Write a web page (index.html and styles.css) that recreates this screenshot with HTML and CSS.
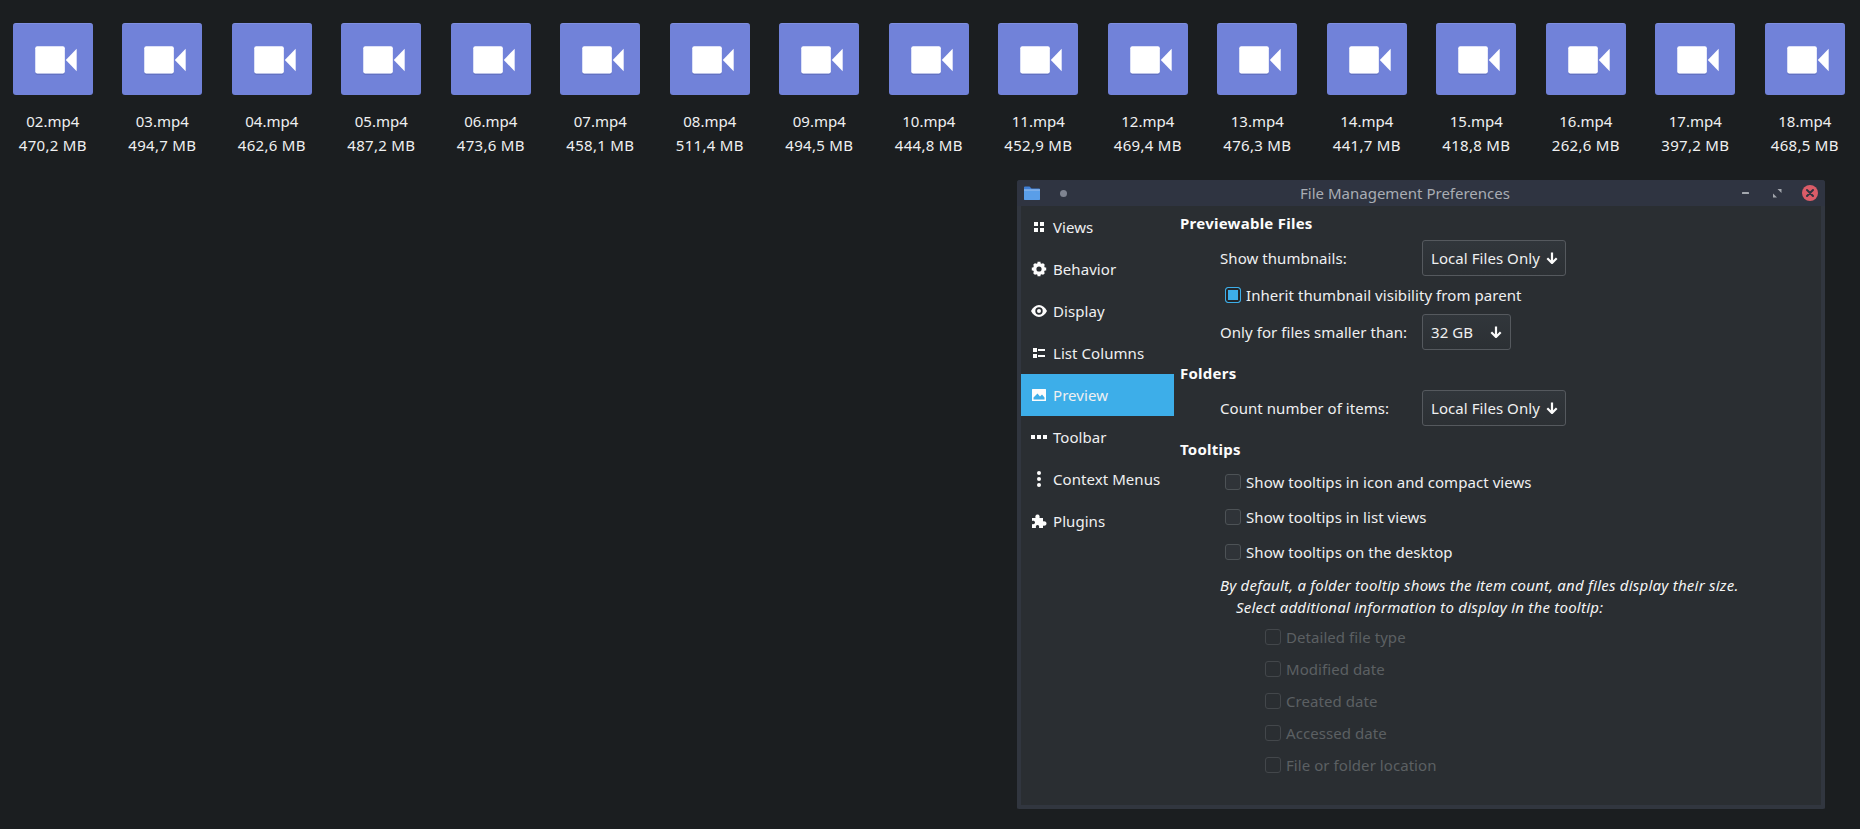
FILE: index.html
```html
<!DOCTYPE html>
<html lang="en">
<head>
<meta charset="utf-8">
<title>File Management Preferences</title>
<link rel="stylesheet" href="styles.css">
</head>
<body>
<svg class="defs" width="0" height="0" aria-hidden="true">
  <symbol id="video" viewBox="0 0 80 72">
    <path d="M22 24.5a2 2 0 0 1 2-2h26a2 2 0 0 1 2 2v24a2 2 0 0 1-2 2H24a2 2 0 0 1-2-2z" fill="#fff"/>
    <path d="M64 25v23L53 36.5z" fill="#fff"/>
    <path d="M22 48.5v1a2 2 0 0 0 2 2h26a2 2 0 0 0 2-2v-1a2 2 0 0 1-2 2H24a2 2 0 0 1-2-2z" fill="#5d6cba"/>
  </symbol>
</svg>

<main class="files">
  <div class="file"><svg class="thumb" viewBox="0 0 80 72"><use href="#video"/></svg><span class="name">02.mp4</span><span class="size">470,2 MB</span></div>
  <div class="file"><svg class="thumb" viewBox="0 0 80 72"><use href="#video"/></svg><span class="name">03.mp4</span><span class="size">494,7 MB</span></div>
  <div class="file"><svg class="thumb" viewBox="0 0 80 72"><use href="#video"/></svg><span class="name">04.mp4</span><span class="size">462,6 MB</span></div>
  <div class="file"><svg class="thumb" viewBox="0 0 80 72"><use href="#video"/></svg><span class="name">05.mp4</span><span class="size">487,2 MB</span></div>
  <div class="file"><svg class="thumb" viewBox="0 0 80 72"><use href="#video"/></svg><span class="name">06.mp4</span><span class="size">473,6 MB</span></div>
  <div class="file"><svg class="thumb" viewBox="0 0 80 72"><use href="#video"/></svg><span class="name">07.mp4</span><span class="size">458,1 MB</span></div>
  <div class="file"><svg class="thumb" viewBox="0 0 80 72"><use href="#video"/></svg><span class="name">08.mp4</span><span class="size">511,4 MB</span></div>
  <div class="file"><svg class="thumb" viewBox="0 0 80 72"><use href="#video"/></svg><span class="name">09.mp4</span><span class="size">494,5 MB</span></div>
  <div class="file"><svg class="thumb" viewBox="0 0 80 72"><use href="#video"/></svg><span class="name">10.mp4</span><span class="size">444,8 MB</span></div>
  <div class="file"><svg class="thumb" viewBox="0 0 80 72"><use href="#video"/></svg><span class="name">11.mp4</span><span class="size">452,9 MB</span></div>
  <div class="file"><svg class="thumb" viewBox="0 0 80 72"><use href="#video"/></svg><span class="name">12.mp4</span><span class="size">469,4 MB</span></div>
  <div class="file"><svg class="thumb" viewBox="0 0 80 72"><use href="#video"/></svg><span class="name">13.mp4</span><span class="size">476,3 MB</span></div>
  <div class="file"><svg class="thumb" viewBox="0 0 80 72"><use href="#video"/></svg><span class="name">14.mp4</span><span class="size">441,7 MB</span></div>
  <div class="file"><svg class="thumb" viewBox="0 0 80 72"><use href="#video"/></svg><span class="name">15.mp4</span><span class="size">418,8 MB</span></div>
  <div class="file"><svg class="thumb" viewBox="0 0 80 72"><use href="#video"/></svg><span class="name">16.mp4</span><span class="size">262,6 MB</span></div>
  <div class="file"><svg class="thumb" viewBox="0 0 80 72"><use href="#video"/></svg><span class="name">17.mp4</span><span class="size">397,2 MB</span></div>
  <div class="file"><svg class="thumb" viewBox="0 0 80 72"><use href="#video"/></svg><span class="name">18.mp4</span><span class="size">468,5 MB</span></div>
</main>

<section class="window">
  <header class="titlebar">
    <div class="tb-left">
      <svg class="tb-folder" width="16" height="14" viewBox="0 0 16 14"><path d="M0 1.5A1 1 0 0 1 1 .5h4.5L7.5 2.5H15a1 1 0 0 1 1 1V13a1 1 0 0 1-1 1H1a1 1 0 0 1-1-1z" fill="#3f7fd6"/><path d="M0 4.5h16V13a1 1 0 0 1-1 1H1a1 1 0 0 1-1-1z" fill="#5a9ee8"/><rect y="3.5" width="16" height="1" fill="#a9cdf3"/></svg>
      <span class="tb-dot"></span>
    </div>
    <div class="tb-title">File Management Preferences</div>
    <div class="tb-right">
      <svg class="tb-min" width="8" height="4" viewBox="0 0 8 4"><rect y="1" width="7" height="2" rx=".5" fill="#a3a7ae"/></svg>
      <svg width="9" height="9" viewBox="0 0 9 9"><path d="M4.500 0h4v4zM4 8.500H0v-4z" fill="#a3a7ae"/></svg>
      <svg width="16" height="16" viewBox="0 0 16 16"><circle cx="8" cy="8" r="8" fill="#da5c68"/><path d="M5 5l6 6M11 5l-6 6" stroke="#2f3440" stroke-width="2" stroke-linecap="round"/></svg>
    </div>
  </header>
  <div class="body">
    <nav class="sidebar">
      <div class="nav-item"><svg class="nav-icon" viewBox="0 0 18 18"><path d="M4 4h4v4H4zM10 4h4v4h-4zM4 10h4v4H4zM10 10h4v4h-4z" fill="#fcfcfc"/></svg>Views</div>
      <div class="nav-item"><svg class="nav-icon" viewBox="0 0 18 18"><circle cx="9" cy="9" r="4.3" fill="none" stroke="#fcfcfc" stroke-width="3.400"/><path d="M7.500 1.800h3v3h-3zM7.500 13.200h3v3h-3zM1.800 7.500h3v3h-3zM13.200 7.500h3v3h-3zM3 5.100 5.100 3l2 2-2 2zM12.900 3 15 5.100l-2 2-2-2zM3 12.900 5.100 15l2-2-2-2zM15 12.900 12.900 15l-2-2 2-2z" fill="#fcfcfc"/></svg>Behavior</div>
      <div class="nav-item"><svg class="nav-icon" viewBox="0 0 18 18"><path fill-rule="evenodd" d="M1 9c1.800-3.600 4.700-6 8-6s6.200 2.400 8 6c-1.800 3.600-4.700 6-8 6s-6.200-2.400-8-6zm8 3.700a3.700 3.700 0 1 0 0-7.400 3.700 3.700 0 0 0 0 7.400z" fill="#fcfcfc"/><circle cx="9" cy="9" r="2" fill="#fcfcfc"/></svg>Display</div>
      <div class="nav-item"><svg class="nav-icon" viewBox="0 0 18 18"><path d="M3 4h4v4H3zM3 10h4v4H3zM8 5h7v2H8zM8 11h7v2H8z" fill="#fcfcfc"/></svg>List Columns</div>
      <div class="nav-item active"><svg class="nav-icon" viewBox="0 0 18 18"><path fill-rule="evenodd" d="M2.500 3h13a.5.5 0 0 1 .5.500v11a.5.5 0 0 1-.5.5h-13a.500.500 0 0 1-.5-.5v-11a.5.5 0 0 1 .5-.5zM3.500 11.500V13.500h11v-2L12 8.500l-2 2L7.500 7.500z" fill="#fcfcfc"/></svg>Preview</div>
      <div class="nav-item"><svg class="nav-icon" viewBox="0 0 18 18"><path d="M1 7h4v4H1zM7 7h4v4H7zM13 7h4v4h-4z" fill="#fcfcfc"/></svg>Toolbar</div>
      <div class="nav-item"><svg class="nav-icon" viewBox="0 0 18 18"><circle cx="9" cy="3" r="2" fill="#fcfcfc"/><circle cx="9" cy="9" r="2" fill="#fcfcfc"/><circle cx="9" cy="15" r="2" fill="#fcfcfc"/></svg>Context Menus</div>
      <div class="nav-item"><svg class="nav-icon" viewBox="0 0 18 18"><path d="M2 6h3.500C5 4.500 5.500 2.500 7.500 2.500S10 4.500 9.500 6H13v3.500c1.500-.5 3.500 0 3.500 2s-2 2.500-3.500 2V16H9c.5-1.500 0-3-1.500-3S5.500 14.500 6 16H2v-4c1.500.5 3 0 3-1.500S3.500 8.500 2 9z" fill="#fcfcfc"/></svg>Plugins</div>
    </nav>
    <div class="content">
      <h2 class="heading first">Previewable Files</h2>
      <div class="row">
        <span class="label">Show thumbnails:</span>
        <div class="combo wide"><span>Local Files Only</span><svg class="arrow" viewBox="0 0 12 12"><path d="M6 .5v10.500M1.300 6.300 6 11l4.700-4.700" fill="none" stroke="#fcfcfc" stroke-width="2.200"/></svg></div>
      </div>
      <label class="check inherit"><span class="box on"></span>Inherit thumbnail visibility from parent</label>
      <div class="row">
        <span class="label">Only for files smaller than:</span>
        <div class="combo narrow"><span>32 GB</span><svg class="arrow" viewBox="0 0 12 12"><path d="M6 .5v10.500M1.300 6.300 6 11l4.700-4.700" fill="none" stroke="#fcfcfc" stroke-width="2.200"/></svg></div>
      </div>
      <h2 class="heading">Folders</h2>
      <div class="row">
        <span class="label">Count number of items:</span>
        <div class="combo wide"><span>Local Files Only</span><svg class="arrow" viewBox="0 0 12 12"><path d="M6 .5v10.500M1.300 6.300 6 11l4.700-4.700" fill="none" stroke="#fcfcfc" stroke-width="2.200"/></svg></div>
      </div>
      <h2 class="heading">Tooltips</h2>
      <div class="tips">
        <label class="check tip"><span class="box"></span>Show tooltips in icon and compact views</label>
        <label class="check tip"><span class="box"></span>Show tooltips in list views</label>
        <label class="check tip"><span class="box"></span>Show tooltips on the desktop</label>
      </div>
      <p class="note">By default, a folder tooltip shows the item count, and files display their size.<span class="note-second">Select additional information to display in the tooltip:</span></p>
      <div class="extras">
        <label class="check extra"><span class="box dim"></span>Detailed file type</label>
        <label class="check extra"><span class="box dim"></span>Modified date</label>
        <label class="check extra"><span class="box dim"></span>Created date</label>
        <label class="check extra"><span class="box dim"></span>Accessed date</label>
        <label class="check extra"><span class="box dim"></span>File or folder location</label>
      </div>
    </div>
  </div>
</section>
</body>
</html>
```
FILE: styles.css
```css
* { box-sizing: border-box; }
html, body { margin: 0; height: 100%; }
body {
  position: relative;
  overflow: hidden;
  background: #1b1e20;
  color: #eff0f1;
  font-family: "Noto Sans", sans-serif;
  font-size: 15px;
}
.defs { position: absolute; }

/* File icons */
.files {
  display: flex;
  justify-content: space-between;
  padding: 23px 15.2px 0 12.8px;
}
.file {
  width: 80px;
  display: flex;
  flex-direction: column;
  align-items: center;
}
.thumb {
  width: 80px;
  height: 72px;
  border-radius: 3px;
  background: #7182d9;
  border-top: 1px solid #7f8fe0;
  margin-bottom: 14px;
}
.name, .size { white-space: nowrap; height: 24px; line-height: 24px; }
.size { letter-spacing: .3px; }

/* Window */
.window {
  position: absolute;
  left: 1017px;
  top: 180px;
  width: 808px;
  height: 629px;
  background: #2a2e32;
  border: 4px solid #31363f;
  border-top: 0;
  border-radius: 3px 3px 2px 2px;
  display: flex;
  flex-direction: column;
}
.titlebar {
  flex: none;
  height: 26px;
  margin: 0 -4px;
  background: #2f3441;
  border-radius: 3px 3px 0 0;
  display: flex;
  align-items: center;
}
.tb-left {
  width: 53px;
  padding-left: 7px;
  display: flex;
  align-items: center;
  gap: 20px;
  flex: none;
}
.tb-dot {
  width: 7px;
  height: 7px;
  border-radius: 50%;
  background: #7f8491;
  flex: none;
}
.tb-folder { flex: none; }
.tb-title {
  flex: 1;
  text-align: center;
  color: #a9adb4;
  white-space: nowrap;
}
.tb-right {
  width: 85px;
  padding-right: 7px;
  display: flex;
  align-items: center;
  justify-content: flex-end;
  gap: 20px;
  flex: none;
}
.tb-min { margin-right: 3px; }

.body { flex: 1; display: flex; min-height: 0; }

/* Sidebar */
.sidebar { width: 153px; flex: none; }
.nav-item {
  height: 42px;
  display: flex;
  align-items: center;
  gap: 5px;
  padding-left: 9px;
  color: #eff0f1;
  letter-spacing: .06px;
}
.nav-item.active { background: #3daee9; }
.nav-icon { width: 18px; height: 18px; flex: none; }

/* Content */
.content { flex: 1; padding-left: 6px; letter-spacing: .06px; }
.heading {
  margin: 6px 0 0;
  height: 34px;
  line-height: 34px;
  font-size: 15px;
  letter-spacing: .25px;
  font-weight: 700;
  color: #fcfcfc;
}
.heading.first { margin-top: 0; }
.row {
  height: 36px;
  display: flex;
  align-items: center;
  padding-left: 40px;
}
.label { width: 202px; flex: none; white-space: nowrap; }
.combo {
  height: 36px;
  border: 1px solid #55595e;
  border-radius: 3px;
  background: linear-gradient(#31363b, #2c3034);
  display: flex;
  align-items: center;
  justify-content: space-between;
  padding: 0 7px 0 8px;
  white-space: nowrap;
}
.combo.wide { width: 144px; }
.combo.narrow { width: 89px; padding-right: 8px; }
.arrow { width: 12px; height: 12px; flex: none; }

.check { display: flex; align-items: center; white-space: nowrap; }
.box {
  width: 16px;
  height: 16px;
  flex: none;
  margin-right: 5px;
  border: 1px solid #4d5256;
  border-radius: 3px;
  background: #2f3338;
}
.box.on {
  border-color: #3daee9;
  background: #3daee9;
  box-shadow: inset 0 0 0 2px #23272b;
}
.box.dim { border-color: #43474b; background: transparent; margin-right: 5px; }
.inherit { height: 38px; padding-left: 45px; }
.tips { margin-top: -1.5px; }
.tip { height: 35px; padding-left: 45px; }
.note {
  margin: 4.5px 0 0;
  padding-left: 40px;
  font-style: italic;
  letter-spacing: .23px;
  line-height: 22px;
  color: #f4f5f5;
}
.note-second { display: block; padding-left: 16px; }
.extras { margin-top: 3px; }
.extra { height: 32px; padding-left: 85px; color: #5c6063; }
```
